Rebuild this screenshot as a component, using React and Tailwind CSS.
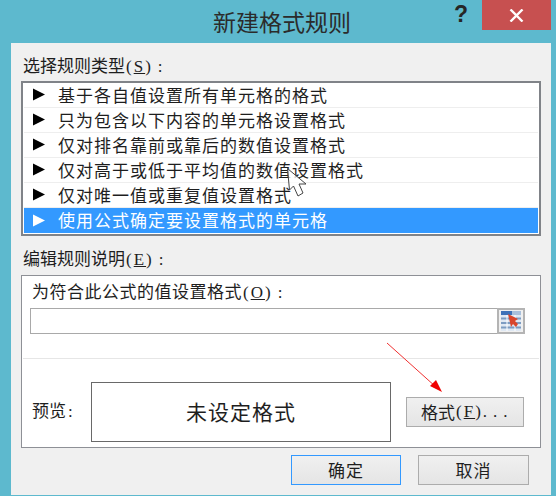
const cjk = { fontFamily: '"Noto Sans CJK SC", "Liberation Serif", serif' };

const rules = [
  '基于各自值设置所有单元格的格式',
  '只为包含以下内容的单元格设置格式',
  '仅对排名靠前或靠后的数值设置格式',
  '仅对高于或低于平均值的数值设置格式',
  '仅对唯一值或重复值设置格式',
  '使用公式确定要设置格式的单元格',
];

function Hotkey({ k }) {
  return (
    <span className="font-['Liberation_Serif'] tracking-[2px] ml-[1px]">
      (<span className="underline underline-offset-1">{k}</span>)
    </span>
  );
}

function Colon() {
  return <span className="font-['Liberation_Serif'] ml-[5px]">:</span>;
}

function RefIcon() {
  return (
    <svg width="22" height="22" viewBox="0 0 22 22">
      <rect x="1" y="1" width="20" height="20" fill="#dfe8f3" />
      <rect x="1" y="1" width="11" height="4" fill="#3f72b8" />
      <rect x="12" y="1" width="9" height="4" fill="#a9c0dc" />
      <path d="M1 8.500h20M1 13h20M1 17.500h20" stroke="#7d9cc2" strokeWidth="2" />
      <path d="M7 5v16M15 5v16" stroke="#fff" strokeWidth="1" />
      <path d="M8 4l10 5-3 2 3 3-2 3-3-3-2 3z" fill="#d9452b" />
    </svg>
  );
}

export default function App() {
  return (
    <div className="relative w-[556px] h-[496px] overflow-hidden bg-[#5db9ce] text-[#1e1e1e]" style={cjk}>
      {/* title bar */}
      <div className="flex h-[43px]">
        <div className="flex-1 pl-[213px] pt-[3px] text-[23px] leading-[36px] text-[#2b2b2b]">新建格式规则</div>
        <div className="w-[24px] pt-[2px] text-[23px] leading-[24px] font-bold text-[#262626] font-['Liberation_Sans']">?</div>
        <div className="ml-[4px] mr-[5px] flex h-[30px] w-[69px] items-center justify-center bg-[#c75050]">
          <svg width="15" height="13" viewBox="0 0 15 13">
            <path d="M1.500 0.500L13.500 12.500M13.500 0.500L1.500 12.500" stroke="#fff" strokeWidth="2.400" />
          </svg>
        </div>
      </div>

      {/* dialog body */}
      <div className="ml-[11px] w-[540px] h-[452px] bg-[#f0f0f0] pl-[10px]">
        <div className="pl-[2px] pt-[9px] h-[38px] text-[17px] leading-[26px]">
          选择规则类型<Hotkey k="S" /><Colon />
        </div>

        <div className="w-[520px] h-[155px] border-2 border-[#808388] bg-white px-[1px]">
          {rules.map((r, i) => (
            <div
              key={r}
              className={`flex items-center h-[25px] pl-[8px] pb-[1px] text-[17px] leading-[24px] ${i === 5 ? 'bg-[#3399ff] text-white' : 'border-b border-[#eeeeee]'}`}
            >
              <svg width="14" height="13" viewBox="0 0 14 13" className="mr-[12px] shrink-0">
                <path d="M1 0.500L13 6.500L1 12.500z" fill={i === 5 ? '#fff' : '#000'} />
              </svg>
              <span className="tracking-[1px]">{r}</span>
            </div>
          ))}
        </div>

        <div className="pl-[2px] pt-[9px] h-[39px] text-[17px] leading-[26px]">
          编辑规则说明<Hotkey k="E" /><Colon />
        </div>

        <div className="w-[520px] h-[173px] border border-[#8e9096] bg-white">
          <div className="pl-[10px] pt-[2px] h-[32px] text-[17px] leading-[26px] tracking-[0.5px]">
            为符合此公式的值设置格式<Hotkey k="O" /><Colon />
          </div>
          <div className="ml-[8px] flex w-[495px] h-[26px] border border-[#a9a9a9] bg-white">
            <div className="flex-1" />
            <div className="flex w-[28px] items-center justify-center border-2 border-[#b4b4b4] bg-[#f0f0f0] -my-px -mr-px">
              <RefIcon />
            </div>
          </div>
          <div className="mt-[24px] mx-[1px] border-t border-[#e6e6e6]" />
          <div className="flex mt-[23px]">
            <div className="w-[69px] pl-[10px] pt-[15px] text-[17px] leading-[26px]">
              预览<span className="font-['Liberation_Serif'] ml-[2px]">:</span>
            </div>
            <div className="flex w-[300px] h-[60px] items-center justify-center border border-[#696969] text-[21px] tracking-[1px]">
              未设定格式
            </div>
            <div className="ml-[15px] mt-[15px] flex w-[118px] h-[30px] items-center pl-[14px] border border-[#acacac] bg-linear-to-b from-[#f0f0f0] to-[#e5e5e5] text-[17px]">
              格式<Hotkey k="F" /><span className="font-['Liberation_Serif'] tracking-[6px]">...</span>
            </div>
          </div>
        </div>

        <div className="flex pl-[270px] pt-[7px] gap-[17px]">
          <div className="flex w-[110px] h-[30px] items-center justify-center border border-[#3399ff] bg-linear-to-b from-[#f0f0f0] to-[#e5e5e5] text-[17px] tracking-[1px]">确定</div>
          <div className="flex w-[111px] h-[30px] items-center justify-center border border-[#acacac] bg-linear-to-b from-[#f0f0f0] to-[#e5e5e5] text-[17px] tracking-[1px]">取消</div>
        </div>
      </div>

      {/* annotation arrow */}
      <svg className="absolute left-[380px] top-[338px]" width="70" height="60" viewBox="0 0 70 60">
        <path d="M7 5L56 49" stroke="#f03030" strokeWidth="1" />
        <path d="M62 54L50 48L56 42z" fill="#f00000" />
      </svg>

      {/* mouse cursor */}
      <svg className="absolute left-[285px] top-[166px]" width="24" height="32" viewBox="0 0 24 32">
        <path d="M2.500 2.500L4.500 24L8.500 20L13 30L18 27L14 18L21 18z" fill="#ffffff" fillOpacity="0.75" stroke="#444" strokeWidth="1" />
      </svg>
    </div>
  );
}
